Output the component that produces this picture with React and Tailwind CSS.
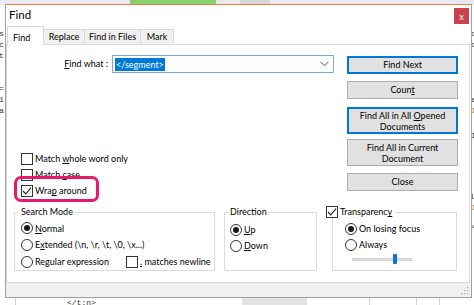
import React from "react";

const FONT = { fontFamily: "Lato, 'Noto Sans', 'Liberation Sans', sans-serif" };

const Radio = ({ checked }) => (
  <span className="w-[12px] h-[12px] rounded-full border border-[#333] bg-white flex items-center justify-center shrink-0">
    {checked && <span className="w-[6px] h-[6px] rounded-full bg-[#1a1a1a]" />}
  </span>
);

const Check = ({ checked }) => (
  <span className="relative w-[12px] h-[12px] border border-[#333] bg-white flex items-center justify-center shrink-0">
    {checked && (
      <svg width="10" height="10" viewBox="0 0 10 10">
        <path d="M1 5 L3.8 8 L9 1.6" stroke="#222" strokeWidth="1.1" fill="none" />
      </svg>
    )}
  </span>
);

const U = ({ children }) => <span className="underline underline-offset-[1px]">{children}</span>;

const Btn = ({ children, focus, h = "h-[18px]", leading = "" }) => (
  <div
    className={`w-[111px] ${h} flex items-center justify-center text-center bg-[#e1e1e1] ${leading} ${
      focus ? "border-2 border-[#0078d7]" : "border border-[#adadad]"
    }`}
  >
    {children}
  </div>
);

export default function App() {
  return (
    <div
      className="relative w-[474px] h-[305px] overflow-hidden bg-white text-black text-[9px] whitespace-nowrap"
      style={FONT}
    >
      {/* editor behind the dialog */}
      <div className="absolute inset-0">
        <div className="flex h-[5px] bg-[#e9e9f2]">
          <div className="w-[130px]" />
          <div className="w-[86px] bg-[#86cf6a]" />
          <div className="w-[24px]" />
          <div className="w-[30px] bg-[#d6d6d6]" />
        </div>
        <div
          className="absolute left-[-1px] top-[28px] flex flex-col text-[8px] leading-[11px] text-[#333]"
          style={{ fontFamily: "'Liberation Mono', monospace" }}
        >
          <span>s</span>
          <span>c</span>
          <span>t</span>
          <span className="h-[22px]" />
          <span>=</span>
          <span>1</span>
          <span>a</span>
        </div>
        <div
          className="absolute left-[471px] top-[28px] flex flex-col text-[8px] leading-[11px] text-[#333]"
          style={{ fontFamily: "'Liberation Mono', monospace" }}
        >
          <span>c</span>
          <span>c</span>
          <span className="h-[44px]" />
          <span>e</span>
          <span className="text-[#d08a2a]">I</span>
          <span className="h-[14px]" />
          <span>I</span>
          <span className="h-[50px]" />
          <span>L</span>
          <span className="text-[#d08a2a]">I</span>
          <span className="h-[8px]" />
          <span>&lt;</span>
        </div>
        <div className="absolute left-0 top-[298px] w-full h-[7px] flex">
          <div className="w-[16px] border-r border-[#cfcfcf]" />
          <div
            className="w-[226px] pl-[51px] text-[8px] leading-[9px] text-[#333]"
            style={{ fontFamily: "'Liberation Mono', monospace" }}
          >
            &lt;/t:n&gt;
          </div>
          <div className="w-[65px] bg-[#e3e3e3]" />
          <div className="w-[30px]" />
          <div className="w-[33px] border-r border-[#d6d6d6]" />
          <div className="w-[47px] border-r border-[#d6d6d6]" />
          <div className="w-[23px] border-r border-[#d6d6d6]" />
        </div>
      </div>

      {/* Find dialog (window on the desktop) */}
      <div className="absolute left-[5px] top-[4px] w-[467px] h-[294px] bg-white border border-[#a0a0a0] border-t-[#ef7b3d] flex flex-col">
        {/* title bar */}
        <div className="h-[20px] flex items-center justify-between pl-[3px] pr-[2px] shrink-0">
          <span className="text-[11.5px]">Find</span>
          <div className="w-[15px] h-[16px] bg-[#c9434c] flex items-center justify-center text-white text-[9px] leading-none mt-[2px]">
            x
          </div>
        </div>
        {/* tabs */}
        <div className="h-[19px] flex items-end shrink-0 pl-[1px]">
          <div className="w-[37px] h-[19px] border border-b-0 border-[#d9d9d9] bg-white pl-[5px] pt-[4px] relative top-[1px]">
            Find
          </div>
          <div className="w-[41px] h-[15px] border border-l-0 border-b-0 border-[#d9d9d9] bg-[#f0f0f0] flex items-center justify-center">
            Replace
          </div>
          <div className="w-[56px] h-[15px] border border-l-0 border-b-0 border-[#d9d9d9] bg-[#f0f0f0] flex items-center justify-center">
            Find in Files
          </div>
          <div className="w-[33px] h-[15px] border border-l-0 border-b-0 border-[#d9d9d9] bg-[#f0f0f0] flex items-center justify-center">
            Mark
          </div>
        </div>
        {/* tab panel */}
        <div className="h-[239px] mr-[1px] border border-[#d9d9d9] bg-white flex flex-col pl-[7px] pt-[10px] shrink-0">
          <div className="flex gap-[13px]">
            {/* left column */}
            <div className="w-[320px] flex flex-col">
              <div className="flex items-center h-[18px]">
                <span className="w-[95px] text-right pr-[1px]">
                  <U>F</U>ind what :
                </span>
                <div className="ml-[3px] w-[222px] h-[18px] border border-[#7da9d8] flex items-center pl-[2px] pr-[4px]">
                  <span className="bg-[#0078d7] text-white px-[1px] leading-[13px]">&lt;/segment&gt;</span>
                  <svg className="ml-auto" width="9" height="6" viewBox="0 0 9 6">
                    <path d="M0.5 0.8 L4.5 4.8 L8.5 0.8" stroke="#555" strokeWidth="1" fill="none" />
                  </svg>
                </div>
              </div>
              <div className="mt-[78px] flex flex-col pl-[7px]">
                <div className="h-[16px] flex items-center gap-[2px]">
                  <Check />
                  <span>
                    Match <U>w</U>hole word only
                  </span>
                </div>
                <div className="h-[16px] flex items-center gap-[2px]">
                  <Check />
                  <span>
                    Match <U>c</U>ase
                  </span>
                </div>
                <div className="h-[16px] flex items-center gap-[2px]">
                  <Check checked />
                  <span>
                    Wra<U>p</U> around
                  </span>
                </div>
              </div>
            </div>
            {/* buttons */}
            <div className="flex flex-col pt-[1px]">
              <Btn focus>Find Next</Btn>
              <div className="mt-[7px]">
                <Btn>
                  <span>
                    Coun<U>t</U>
                  </span>
                </Btn>
              </div>
              <div className="mt-[8px]">
                <Btn focus h="h-[27px]" leading="leading-[11px]">
                  <span>
                    Find All in All <U>O</U>pened
                    <br />
                    Documents
                  </span>
                </Btn>
              </div>
              <div className="mt-[5px]">
                <Btn h="h-[27px]" leading="leading-[11px]">
                  <span>
                    Find All in Current
                    <br />
                    Document
                  </span>
                </Btn>
              </div>
              <div className="mt-[7px]">
                <Btn>Close</Btn>
              </div>
            </div>
          </div>

          {/* group boxes */}
          <div className="flex mt-[13px]">
            <div className="w-[201px] h-[59px] border border-[#dcdcdc] flex flex-col pl-[6px]">
              <div className="-mt-[7px] h-[12px] w-fit bg-white -ml-[2px] px-[2px] leading-[12px]">Search Mode</div>
              <div className="mt-[2px] h-[17px] flex items-center gap-[2px]">
                <Radio checked />
                <span>
                  <U>N</U>ormal
                </span>
              </div>
              <div className="h-[17px] flex items-center gap-[2px]">
                <Radio />
                <span>
                  E<U>x</U>tended (\n, \r, \t, \0, \x...)
                </span>
              </div>
              <div className="h-[17px] flex items-center gap-[2px]">
                <Radio />
                <span className="w-[89px] shrink-0">
                  Re<U>g</U>ular expression
                </span>
                <Check />
                <span className="shrink-0">
                  <U>.</U> matches newline
                </span>
              </div>
            </div>
            <div className="ml-[9px] w-[93px] h-[59px] border border-[#dcdcdc] flex flex-col pl-[5px]">
              <div className="-mt-[7px] h-[12px] w-fit bg-white -ml-[1px] px-[1px] leading-[12px]">Direction</div>
              <div className="mt-[4px] h-[16px] flex items-center gap-[2px]">
                <Radio checked />
                <span>
                  <U>U</U>p
                </span>
              </div>
              <div className="h-[16px] flex items-center gap-[2px]">
                <Radio />
                <span>
                  <U>D</U>own
                </span>
              </div>
            </div>
            <div className="ml-[15px] w-[125px] h-[59px] border border-[#dcdcdc] flex flex-col">
              <div className="-mt-[7px] -ml-[7px] h-[12px] w-fit bg-white pr-[3px] flex items-center gap-[2px]">
                <Check checked />
                <span>
                  Transparenc<U>y</U>
                </span>
              </div>
              <div className="pl-[12px] mt-[3px] h-[16px] flex items-center gap-[2px]">
                <Radio checked />
                <span>On losing focus</span>
              </div>
              <div className="pl-[12px] h-[16px] flex items-center gap-[2px]">
                <Radio />
                <span>Always</span>
              </div>
              <div className="pl-[19px] h-[12px] flex items-center">
                <div className="w-[60px] h-[3px] bg-[#e2e2e2] border border-[#d0d0d0] flex items-center">
                  <div className="ml-[40px] w-[4px] h-[10px] bg-[#0078d7] rounded-[1px]" />
                </div>
              </div>
            </div>
          </div>
        </div>
        {/* bottom strip with resize grip */}
        <div className="flex-1 bg-[#f0f0f0] flex items-end justify-end pr-[2px] pb-[2px]">
          <svg width="8" height="8" viewBox="0 0 8 8">
            <rect x="6" y="0" width="1.2" height="1.2" fill="#a8a8a8" />
            <rect x="3" y="3" width="1.2" height="1.2" fill="#a8a8a8" />
            <rect x="6" y="3" width="1.2" height="1.2" fill="#a8a8a8" />
            <rect x="0" y="6" width="1.2" height="1.2" fill="#a8a8a8" />
            <rect x="3" y="6" width="1.2" height="1.2" fill="#a8a8a8" />
            <rect x="6" y="6" width="1.2" height="1.2" fill="#a8a8a8" />
          </svg>
        </div>
      </div>

      {/* annotation highlight around "Wrap around" */}
      <div className="absolute left-[14px] top-[176px] w-[85px] h-[26px] border-[3px] border-[#e8196a] rounded-[7px]" />
    </div>
  );
}
